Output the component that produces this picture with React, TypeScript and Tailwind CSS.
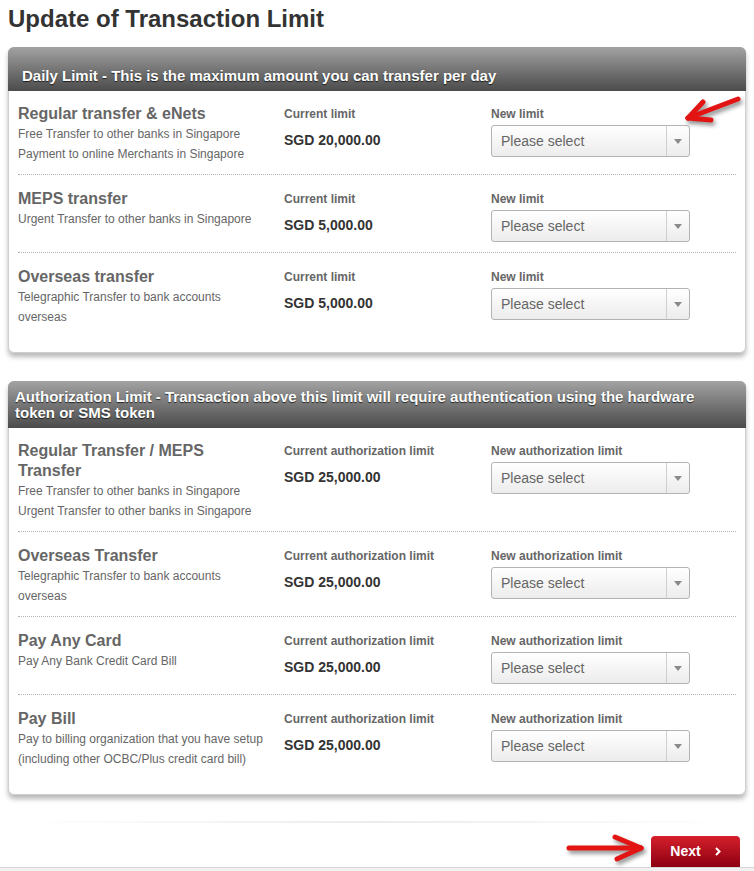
import React from 'react'

type LimitRow = {
  title: string
  lines: string[]
  current: string
}

const DAILY: LimitRow[] = [
  {
    title: 'Regular transfer & eNets',
    lines: ['Free Transfer to other banks in Singapore', 'Payment to online Merchants in Singapore'],
    current: 'SGD 20,000.00',
  },
  { title: 'MEPS transfer', lines: ['Urgent Transfer to other banks in Singapore'], current: 'SGD 5,000.00' },
  { title: 'Overseas transfer', lines: ['Telegraphic Transfer to bank accounts overseas'], current: 'SGD 5,000.00' },
]

const AUTH: LimitRow[] = [
  {
    title: 'Regular Transfer / MEPS Transfer',
    lines: ['Free Transfer to other banks in Singapore', 'Urgent Transfer to other banks in Singapore'],
    current: 'SGD 25,000.00',
  },
  { title: 'Overseas Transfer', lines: ['Telegraphic Transfer to bank accounts overseas'], current: 'SGD 25,000.00' },
  { title: 'Pay Any Card', lines: ['Pay Any Bank Credit Card Bill'], current: 'SGD 25,000.00' },
  {
    title: 'Pay Bill',
    lines: ['Pay to billing organization that you have setup', '(including other OCBC/Plus credit card bill)'],
    current: 'SGD 25,000.00',
  },
]

function Select() {
  return (
    <div className="mt-px flex h-[32px] w-[199px] rounded-[3px] border border-[#b3b3b3] bg-gradient-to-b from-white to-[#ececec]">
      <div className="flex flex-1 items-center pl-[9px] text-[14px] text-[#666]">Please select</div>
      <div className="flex w-[23px] items-center justify-center border-l border-[#cfcfcf]">
        <svg width="8" height="5" viewBox="0 0 8 5">
          <path d="M0 0h8L4 5z" fill="#8a8a8a" />
        </svg>
      </div>
    </div>
  )
}

function Row({ row, currentLabel, newLabel, last }: {
  row: LimitRow
  currentLabel: string
  newLabel: string
  last: boolean
}) {
  return (
    <div
      className={`mx-[9px] grid grid-cols-[266px_207px_199px] pt-[14px] pb-[10px] ${
        last ? '' : 'border-b border-dotted border-[#b5b5b5]'
      }`}
    >
      <div className="w-[250px]">
        <div className="text-[16px] font-bold leading-[20px] text-[#666]">{row.title}</div>
        {row.lines.map(l => (
          <div key={l} className="text-[12px] leading-[20px] text-[#666]">{l}</div>
        ))}
      </div>
      <div>
        <div className="text-[12px] font-bold leading-[20px] text-[#666]">{currentLabel}</div>
        <div className="mt-[6px] text-[14px] font-bold leading-[20px] text-[#333]">{row.current}</div>
      </div>
      <div>
        <div className="text-[12px] font-bold leading-[20px] text-[#666]">{newLabel}</div>
        <Select />
      </div>
    </div>
  )
}

function Panel({ header, rows, currentLabel, newLabel, headerClass }: {
  header: React.ReactNode
  rows: LimitRow[]
  currentLabel: string
  newLabel: string
  headerClass: string
}) {
  return (
    <div className="mx-2 rounded-[6px] border border-[#cfcfcf] bg-white pb-[15px] shadow-[0_4px_5px_rgba(0,0,0,0.28)]">
      <div
        className={`-m-px rounded-t-[6px] bg-gradient-to-b from-[#a3a3a3] to-[#4c4c4c] text-[15px] font-bold text-white [text-shadow:0_1px_1px_rgba(0,0,0,0.7)] ${headerClass}`}
      >
        {header}
      </div>
      {rows.map((r, i) => (
        <Row
          key={r.title}
          row={r}
          currentLabel={currentLabel}
          newLabel={newLabel}
          last={i === rows.length - 1}
        />
      ))}
    </div>
  )
}

export default function App() {
  return (
    <div className="relative h-[871px] w-[754px] overflow-hidden bg-white font-['Liberation_Sans',Arial,sans-serif]">
      <h1 className="px-2 pt-[5px] text-[24px] font-bold leading-[28px] text-[#333]">Update of Transaction Limit</h1>

      <div className="mt-[14px]">
        <Panel
          header="Daily Limit - This is the maximum amount you can transfer per day"
          headerClass="px-[14px] pt-[20px] pb-[7px] leading-[17px]"
          rows={DAILY}
          currentLabel="Current limit"
          newLabel="New limit"
        />
      </div>

      <div className="mt-[28px]">
        <Panel
          header={
            <>
              Authorization Limit - Transaction above this limit will require authentication using the hardware
              <br />
              token or SMS token
            </>
          }
          headerClass="px-[7px] pt-[8px] pb-[7px] leading-[16px]"
          rows={AUTH}
          currentLabel="Current authorization limit"
          newLabel="New authorization limit"
        />
      </div>

      <div className="mx-5 mt-[26px] h-[2px] bg-gradient-to-r from-transparent via-[#ececec] to-transparent" />

      <div className="mt-[13px] flex justify-end pr-[14px]">
        <button className="flex h-[31px] w-[89px] items-center justify-center gap-[14px] rounded-t-[4px] bg-gradient-to-b from-[#d61f2b] to-[#8c0012] text-[14px] font-bold text-white">
          <span>Next</span>
          <svg width="6" height="9" viewBox="0 0 6 9">
            <path d="M1 1l3.5 3.5L1 8" fill="none" stroke="white" strokeWidth="2" />
          </svg>
        </button>
      </div>
      <div className="absolute bottom-0 left-0 h-[4px] w-full border-t border-[#d6d6d6] bg-[#f1f1f1]" />

      {/* annotation arrows */}
      <svg
        className="absolute left-[676px] top-[90px] drop-shadow-[2px_3px_2px_rgba(0,0,0,0.45)]"
        width="72"
        height="40"
        viewBox="676 90 72 40"
      >
        <g stroke="#e31414" strokeWidth="5" strokeLinecap="round" fill="none">
          <path d="M738 99L688 118" />
          <path d="M688 118L703 102" />
          <path d="M688 118L711 120" />
        </g>
      </svg>
      <svg
        className="absolute left-[564px] top-[832px] drop-shadow-[2px_3px_2px_rgba(0,0,0,0.45)]"
        width="86"
        height="32"
        viewBox="564 832 86 32"
      >
        <g stroke="#e31414" strokeWidth="5" strokeLinecap="round" fill="none">
          <path d="M569 848H641" />
          <path d="M641 848L615 837" />
          <path d="M641 848L617 859" />
        </g>
      </svg>
    </div>
  )
}
